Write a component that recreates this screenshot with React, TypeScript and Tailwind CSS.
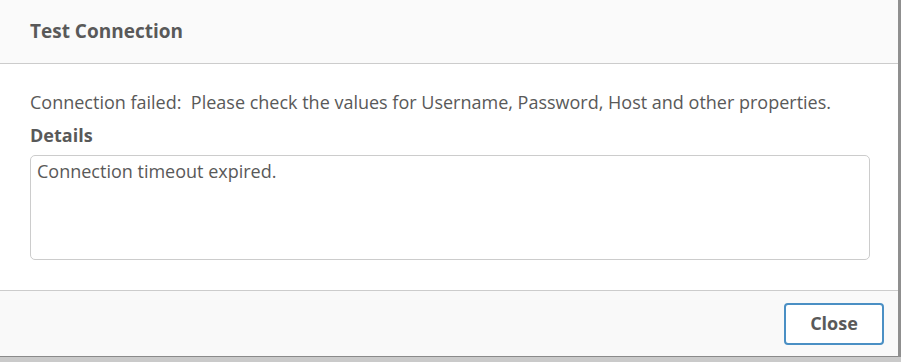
import React from "react"

export default function App() {
  return (
    <div className="flex h-[362px] w-[901px] flex-col bg-[#cacaca]" style={{ fontFamily: "'Open Sans', Roboto, sans-serif" }}>
      <div className="flex h-[357px] w-full">
        <div className="flex h-full w-[898px] flex-col border-b border-[#8a8a8a] bg-white">
          <div className="flex h-[64px] items-center border-b border-[#cccccc] bg-[#fafafa] px-[30px]">
            <h2 className="text-[19px] font-bold text-[#595959]">Test Connection</h2>
          </div>
          <div className="flex flex-1 flex-col px-[30px] pt-[26px]">
            <p className="text-[18px] leading-[24px] text-[#595959]">
              Connection failed:&nbsp; Please check the values for Username, Password, Host and other properties.
            </p>
            <h3 className="mt-[9px] text-[18px] font-bold leading-[24px] text-[#595959]">Details</h3>
            <textarea
              readOnly
              className="mt-[8px] h-[105px] w-[840px] resize-none rounded-[5px] border border-[#cccccc] px-[6px] py-[3px] text-[18px] leading-[24px] text-[#595959] outline-none"
              defaultValue="Connection timeout expired."
            />
          </div>
          <div className="flex h-[66px] items-center justify-end border-t border-[#cccccc] bg-[#f9f9f9] px-[14px]">
            <button className="h-[42px] w-[100px] rounded-[4px] border-2 border-[#4a8fc4] bg-white text-[18px] font-bold text-[#595959]">
              Close
            </button>
          </div>
        </div>
        <div className="h-full flex-1 bg-[#8f8f8f]" />
      </div>
    </div>
  )
}
